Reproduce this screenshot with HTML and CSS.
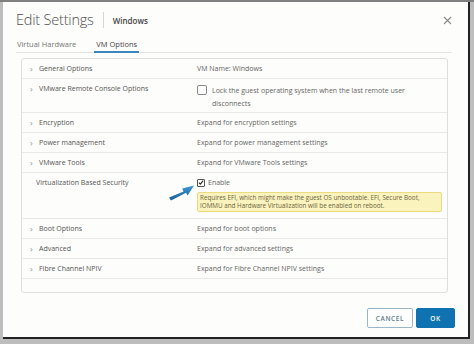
FILE: index.html
```html
<!DOCTYPE html>
<html lang="en">
<head>
  <meta charset="UTF-8" />
  <title>Edit Settings - Windows</title>
  <link rel="stylesheet" href="styles.css">
</head>
<body>

  <div class="dialog">
    <div class="header">
      <h1>Edit Settings</h1>
      <span class="vm-name">Windows</span>
      <svg class="close" width="9" height="9" viewBox="0 0 9 9">
        <path d="M1 1 L8 8 M8 1 L1 8" stroke="#8a8a8a" stroke-width="1.1" fill="none"/>
      </svg>
    </div>

    <div class="tabs">
      <span class="tab">Virtual Hardware</span>
      <span class="tab active">VM Options</span>
    </div>

    <div class="table">
      <div class="row">
        <div class="label"><span class="caret">&rsaquo;</span>General Options</div>
        <div class="value">VM Name: Windows</div>
      </div>
      <div class="row tall">
        <div class="label"><span class="caret">&rsaquo;</span>VMware Remote Console Options</div>
        <div class="value check-line">
          <span class="box"></span>
          <span>Lock the guest operating system when the last remote user disconnects</span>
        </div>
      </div>
      <div class="row">
        <div class="label"><span class="caret">&rsaquo;</span>Encryption</div>
        <div class="value">Expand for encryption settings</div>
      </div>
      <div class="row">
        <div class="label"><span class="caret">&rsaquo;</span>Power management</div>
        <div class="value">Expand for power management settings</div>
      </div>
      <div class="row">
        <div class="label"><span class="caret">&rsaquo;</span>VMware Tools</div>
        <div class="value">Expand for VMware Tools settings</div>
      </div>
      <div class="row vbs">
        <div class="label no-caret">Virtualization Based Security</div>
        <div class="value">
          <div class="enable">
            <span class="box checked">
              <svg width="7" height="7" viewBox="0 0 7 7"><path d="M1 3.6 L2.8 5.4 L6 1.2" stroke="#333" stroke-width="1.4" fill="none"/></svg>
            </span>
            <span>Enable</span>
          </div>
          <div class="warning">Requires EFI, which might make the guest OS unbootable. EFI, Secure Boot, IOMMU and Hardware Virtualization will be enabled on reboot.</div>
        </div>
        <svg class="arrow" width="30" height="20" viewBox="0 0 30 20">
          <defs>
            <linearGradient id="ag" x1="0" y1="0" x2="0" y2="1">
              <stop offset="0" stop-color="#3d95d6"/>
              <stop offset="1" stop-color="#1a5f99"/>
            </linearGradient>
          </defs>
          <path d="M2 15.5 L16.5 9.6 L15.2 6.6 L27 3.5 L20.6 13.4 L19.1 10.7 L4 18.6 Z" fill="url(#ag)"/>
        </svg>
      </div>
      <div class="row">
        <div class="label"><span class="caret">&rsaquo;</span>Boot Options</div>
        <div class="value">Expand for boot options</div>
      </div>
      <div class="row">
        <div class="label"><span class="caret">&rsaquo;</span>Advanced</div>
        <div class="value">Expand for advanced settings</div>
      </div>
      <div class="row">
        <div class="label"><span class="caret">&rsaquo;</span>Fibre Channel NPIV</div>
        <div class="value">Expand for Fibre Channel NPIV settings</div>
      </div>
      <div class="row empty"></div>
    </div>

    <div class="footer">
      <button class="btn cancel">CANCEL</button>
      <button class="btn ok">OK</button>
    </div>
  </div>

</body>
</html>
```

FILE: styles.css
```css
* { margin: 0; padding: 0; box-sizing: border-box; }

body {
  background: #bdbdbd;
  font-family: 'Open Sans', sans-serif;
  color: #575757;
  width: 474px;
  height: 344px;
  overflow: hidden;
  border-top: 2px solid #808080;
}

.dialog {
  margin-left: 3px;
  width: 467px;
  height: 337px;
  background: #fdfdfb;
  border-right: 2px solid #222;
  border-bottom: 2px solid #222;
  padding: 0 13px 0 13px;
  display: flex;
  flex-direction: column;
}

.header {
  display: flex;
  align-items: center;
  height: 34px;
  padding-top: 2px;
  position: relative;
}

.header h1 {
  font-weight: 300;
  font-size: 14.5px;
  letter-spacing: -0.2px;
  color: #4f4f4f;
  padding-right: 9px;
  border-right: 1px solid #d6d6d6;
  line-height: 16px;
}

.vm-name {
  font-size: 8px;
  font-weight: 600;
  color: #444;
  margin-left: 9px;
}

.close {
  margin-left: auto;
  margin-right: 3px;
}

.tabs {
  display: flex;
  gap: 17px;
  border-bottom: 1px solid #e2e2e2;
  height: 17px;
  margin-right: 3px;
}

.tab {
  font-size: 7.5px;
  color: #777;
  padding: 3px 1px 0 1px;
}

.tab.active {
  color: #444;
  border-bottom: 2px solid #3c86bd;
  margin-bottom: -1px;
  padding: 3px 2px 0 2px;
}

.table {
  margin: 5px 7px 0 5px;
  border: 1px solid #dedede;
  border-radius: 3px;
  height: 235px;
}

.row {
  display: grid;
  grid-template-columns: 175px 1fr;
  border-bottom: 1px solid #e9e9e9;
  height: 20px;
  align-items: center;
  font-size: 7px;
  position: relative;
}

.row.tall {
  height: 34px;
  align-items: start;
  padding-top: 5px;
}

.row.vbs {
  height: 46px;
  align-items: start;
  padding-top: 5px;
}

.row.empty {
  border-bottom: none;
  height: 14px;
}

.label {
  color: #555;
  padding-left: 8px;
  display: flex;
  align-items: center;
}

.label.no-caret {
  padding-left: 14px;
}

.caret {
  width: 9px;
  font-size: 9px;
  color: #999;
  line-height: 7px;
}

.value {
  color: #666;
}

.check-line {
  display: flex;
  gap: 5px;
  line-height: 13px;
  padding-right: 40px;
}

.box {
  width: 10px;
  height: 10px;
  border: 1px solid #888;
  border-radius: 2px;
  background: #fff;
  flex-shrink: 0;
  margin-top: 1px;
}

.enable {
  display: flex;
  align-items: center;
  gap: 3px;
}

.box.checked {
  width: 8px;
  height: 8px;
  margin-top: 0;
  border-color: #555;
  border-radius: 1px;
  display: flex;
  align-items: center;
  justify-content: center;
}

.warning {
  margin-top: 5px;
  margin-right: 5px;
  background: #fbf3bd;
  border: 1px solid #eadb82;
  border-radius: 2px;
  font-size: 6.3px;
  line-height: 8px;
  color: #6a6340;
  padding: 1px 8px 1px 2px;
}

.arrow {
  position: absolute;
  left: 145px;
  top: 9px;
}

.footer {
  display: flex;
  justify-content: flex-end;
  gap: 3px;
  margin-top: 15px;
}

.btn {
  font-family: 'Open Sans', sans-serif;
  font-size: 6.5px;
  font-weight: 600;
  letter-spacing: 0.6px;
  height: 20px;
  border-radius: 2px;
  cursor: pointer;
}

.cancel {
  width: 46px;
  background: #fff;
  border: 1px solid #9bb6c8;
  color: #5d7a8c;
}

.ok {
  width: 39px;
  background: #0f72b1;
  border: 1px solid #0f72b1;
  color: #fff;
}
```
